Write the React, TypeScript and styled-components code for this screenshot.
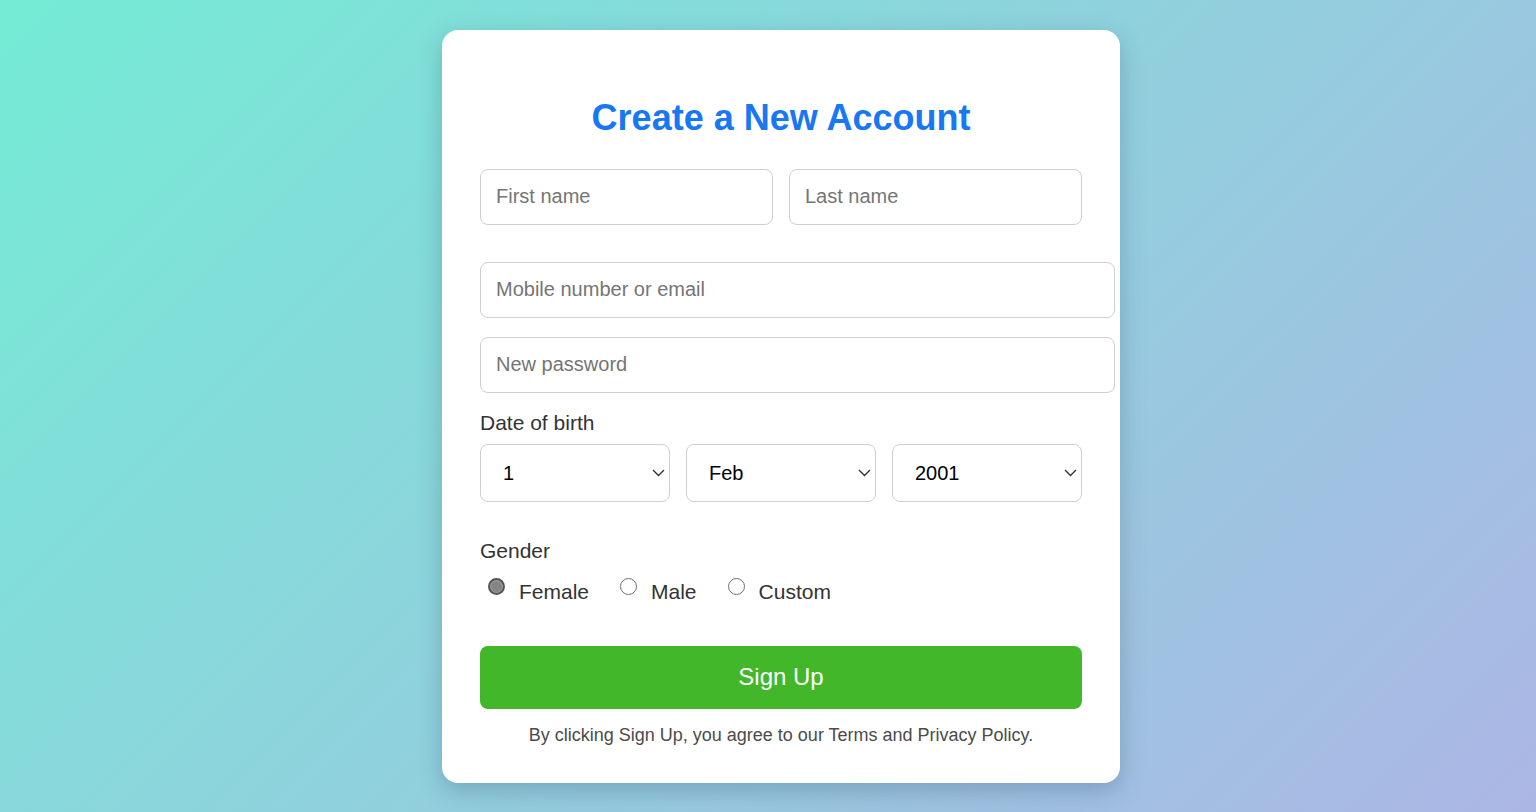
import styled, { createGlobalStyle } from "styled-components";

const GlobalStyle = createGlobalStyle`
  * {
    font-family: "Liberation Sans", Arial, sans-serif;
  }

  body {
    margin: 0;
  }
`;

const Page = styled.main`
  display: flex;
  align-items: center;
  justify-content: center;
  min-height: 100vh;
  padding-left: 26px;
  box-sizing: border-box;
  background: linear-gradient(135deg, #74ebd5, #acb6e5);
`;

const Card = styled.form`
  width: 678px;
  box-sizing: border-box;
  padding: 67px 38px 37px;
  background: #fff;
  border-radius: 16px;
  box-shadow: 0 8px 24px rgba(40, 70, 100, 0.28);
  display: flex;
  flex-direction: column;
`;

const Title = styled.h1`
  margin: 0 0 31px;
  font-size: 36px;
  line-height: 41px;
  font-weight: 700;
  color: #1877f2;
  text-align: center;
`;

const NameRow = styled.div`
  display: flex;
  gap: 16px;
  margin-bottom: 37px;
`;

const TextInput = styled.input<{ $wide?: boolean }>`
  box-sizing: ${(p) => (p.$wide ? "content-box" : "border-box")};
  width: ${(p) => (p.$wide ? "100%" : "auto")};
  flex: ${(p) => (p.$wide ? "none" : "1")};
  min-width: 0;
  height: ${(p) => (p.$wide ? "54px" : "56px")};
  padding: ${(p) => (p.$wide ? "0 16px 0 15px" : "0 15px")};
  margin-bottom: ${(p) => (p.$wide ? "19px" : "0")};
  border: 1px solid #cfcfcf;
  border-radius: 8px;
  font-size: 20px;
  color: #1c1e21;
  outline: none;

  &::placeholder {
    color: #757575;
  }
`;

const FieldLabel = styled.div<{ $gap: number }>`
  margin-top: ${(p) => p.$gap}px;
  font-size: 21px;
  line-height: 23px;
  color: #333;
`;

const SelectRow = styled.div`
  display: flex;
  gap: 16px;
  margin-top: 10px;
`;

const SelectWrap = styled.div`
  position: relative;
  flex: 1;

  svg {
    position: absolute;
    right: 5px;
    top: 25px;
    pointer-events: none;
  }
`;

const Select = styled.select`
  appearance: none;
  width: 100%;
  height: 58px;
  padding: 0 22px;
  border: 1px solid #cfcfcf;
  border-radius: 8px;
  background: #fff;
  font-size: 20px;
  color: #000;
  outline: none;
`;

const RadioGroup = styled.div`
  display: flex;
  gap: 31px;
  margin-top: 18px;
  padding-left: 8px;
`;

const RadioLabel = styled.label`
  display: flex;
  align-items: flex-start;
  gap: 14px;
  font-size: 21px;
  line-height: 23px;
  color: #333;
`;

const Radio = styled.input.attrs({ type: "radio" })`
  appearance: none;
  width: 17px;
  height: 17px;
  margin: -2px 0 0;
  border: 1px solid #6f6f6f;
  border-radius: 50%;
  background: #fff;

  &:checked {
    border: 2px solid #555;
    background: #858585;
    box-shadow: inset 0 0 0 1px #a5a5a5;
  }
`;

const SubmitButton = styled.button`
  margin-top: 43px;
  height: 63px;
  border: none;
  border-radius: 8px;
  background: #42b72a;
  color: #fff;
  font-size: 24px;
`;

const Terms = styled.p`
  margin: 16px 0 0;
  font-size: 18px;
  line-height: 21px;
  color: #4b4b4b;
  text-align: center;
`;

const Chevron = () => (
  <svg width="13" height="8" viewBox="0 0 13 8" fill="none">
    <path d="M1 1L6.5 6.5L12 1" stroke="#333" strokeWidth="1.4" />
  </svg>
);

const days = Array.from({ length: 31 }, (_, i) => String(i + 1));
const months = ["Jan", "Feb", "Mar", "Apr", "May", "Jun", "Jul", "Aug", "Sep", "Oct", "Nov", "Dec"];
const years = Array.from({ length: 60 }, (_, i) => String(2024 - i));

const App = () => {
  return (
    <>
      <GlobalStyle />
      <Page>
        <Card onSubmit={(e) => e.preventDefault()}>
          <Title>Create a New Account</Title>
          <NameRow>
            <TextInput placeholder="First name" />
            <TextInput placeholder="Last name" />
          </NameRow>
          <TextInput $wide placeholder="Mobile number or email" />
          <TextInput $wide type="password" placeholder="New password" />

          <FieldLabel $gap={-1}>Date of birth</FieldLabel>
          <SelectRow>
            <SelectWrap>
              <Select defaultValue="1">
                {days.map((d) => (
                  <option key={d}>{d}</option>
                ))}
              </Select>
              <Chevron />
            </SelectWrap>
            <SelectWrap>
              <Select defaultValue="Feb">
                {months.map((m) => (
                  <option key={m}>{m}</option>
                ))}
              </Select>
              <Chevron />
            </SelectWrap>
            <SelectWrap>
              <Select defaultValue="2001">
                {years.map((y) => (
                  <option key={y}>{y}</option>
                ))}
              </Select>
              <Chevron />
            </SelectWrap>
          </SelectRow>

          <FieldLabel $gap={37}>Gender</FieldLabel>
          <RadioGroup>
            <RadioLabel>
              <Radio name="gender" defaultChecked />
              Female
            </RadioLabel>
            <RadioLabel>
              <Radio name="gender" />
              Male
            </RadioLabel>
            <RadioLabel>
              <Radio name="gender" />
              Custom
            </RadioLabel>
          </RadioGroup>

          <SubmitButton type="submit">Sign Up</SubmitButton>
          <Terms>By clicking Sign Up, you agree to our Terms and Privacy Policy.</Terms>
        </Card>
      </Page>
    </>
  );
};

export default App;
